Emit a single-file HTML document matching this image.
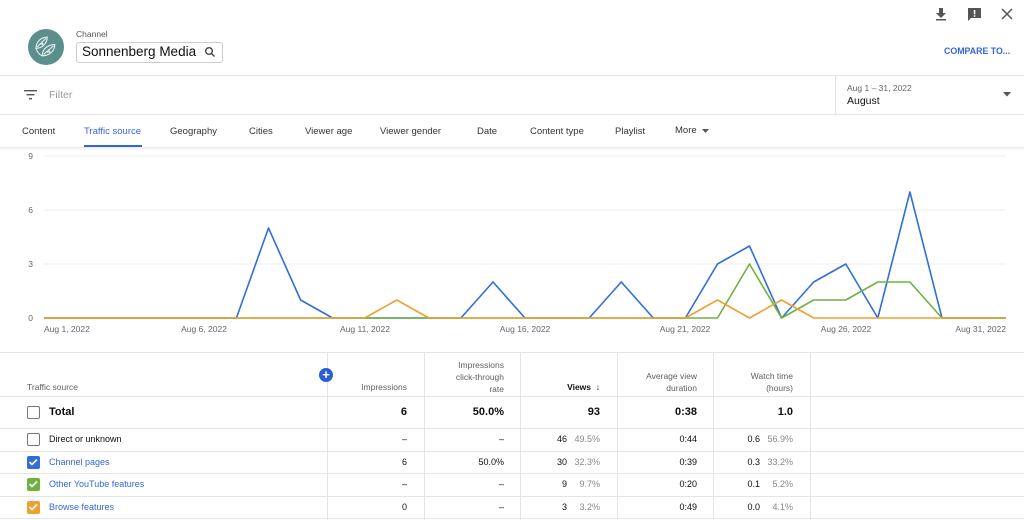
<!DOCTYPE html>
<html><head><meta charset="utf-8"><style>
*{box-sizing:border-box;margin:0;padding:0}
body{width:1024px;height:520px;overflow:hidden;background:#fff;font-family:"Liberation Sans",Arial,sans-serif;color:#0d0d0d;position:relative}
.a{position:absolute}
.t{font-size:10px;color:#333}
.hdr{font-size:8.5px;color:#606060;text-align:right;line-height:12px}
.num{font-size:9px;color:#0d0d0d;text-align:right}
.g{color:#888}
.vl{position:absolute;top:352px;height:168px;width:1px;background:#e5e5e5}
.hl{position:absolute;left:0;width:1024px;height:1px;background:#e5e5e5}
.cb{position:absolute;left:27px;width:13px;height:13px;border-radius:2px}
.lnk{color:#3467d6}
</style></head><body>
<!-- top -->
<div class="a" style="left:28px;top:29px;width:36px;height:36px;border-radius:50%;background:#5b8f8c"></div>
<svg class="a" style="left:31px;top:32px" width="30" height="30" viewBox="0 0 24 24" fill="none" stroke="#e4efee" stroke-width="0.9"><path d="M4 13c0-5 4-9 9-9 0 5-4 9-9 9z M5 12l7-7 M7 9.5h3 M9 7.5v3"/><path d="M9 19c0-5 4-9 10-9 0 5-4 9-10 9z M10 18l8-7 M12 16h3.5 M14.5 13.5v3"/><path d="M4 13c1 3 3 6 6 6"/></svg>
<div class="a" style="left:76px;top:29px;font-size:8.5px;color:#555">Channel</div>
<div class="a" style="left:76px;top:42px;width:147px;height:21px;border:1px solid #ccc;border-radius:3px"></div>
<div class="a" style="left:82px;top:44px;font-size:13.5px;color:#111">Sonnenberg Media</div>
<svg class="a" style="left:204px;top:46px" width="12" height="12" viewBox="0 0 12 12" fill="none" stroke="#444" stroke-width="1.4"><circle cx="5" cy="5" r="3.3"/><path d="M7.5 7.5l3 3"/></svg>
<svg class="a" style="left:935px;top:8px" width="12" height="13" viewBox="0 0 12 13"><path d="M4 0h4v5h3l-5 5-5-5h3z M1 11h10v1.5H1z" fill="#555"/></svg>
<svg class="a" style="left:967px;top:7px" width="15" height="15" viewBox="0 0 15 15"><path d="M1 1h13v10H4l-3 3z" fill="#555"/><rect x="6.8" y="3" width="1.5" height="4.5" fill="#fff"/><rect x="6.8" y="8.3" width="1.5" height="1.5" fill="#fff"/></svg>
<svg class="a" style="left:1001px;top:8px" width="12" height="12" viewBox="0 0 12 12" stroke="#555" stroke-width="1.5"><path d="M1 1l10 10M11 1L1 11"/></svg>
<div class="a" style="left:944px;top:46px;font-size:8.8px;color:#3467d6;font-weight:bold">COMPARE TO...</div>
<div class="hl" style="top:75px"></div>
<svg class="a" style="left:24px;top:89px" width="13" height="11" viewBox="0 0 13 11" fill="#555"><rect x="0" y="1" width="13" height="1.4"/><rect x="2.5" y="5" width="8" height="1.4"/><rect x="5" y="9" width="3" height="1.4"/></svg>
<div class="a" style="left:49px;top:89px;font-size:10.5px;color:#999">Filter</div>
<div class="a" style="left:835px;top:75px;width:1px;height:39px;background:#e5e5e5"></div>
<div class="a" style="left:847px;top:83px;font-size:8.5px;color:#666">Aug 1 – 31, 2022</div>
<div class="a" style="left:847px;top:95px;font-size:10.5px;color:#111">August</div>
<svg class="a" style="left:1003px;top:92px" width="8" height="5"><path d="M0 0h8L4 4.5z" fill="#555"/></svg>
<div class="hl" style="top:114px"></div>
<!-- tabs -->
<div class="a t" style="left:22px;top:126px;font-size:9.5px">Content</div>
<div class="a t" style="left:84px;top:126px;font-size:9.5px;color:#3467d6">Traffic source</div>
<div class="a" style="left:84px;top:145px;width:58px;height:2px;background:#3467d6"></div>
<div class="a t" style="left:170px;top:126px;font-size:9.5px">Geography</div>
<div class="a t" style="left:249px;top:126px;font-size:9.5px">Cities</div>
<div class="a t" style="left:305px;top:126px;font-size:9.5px">Viewer age</div>
<div class="a t" style="left:380px;top:126px;font-size:9.5px">Viewer gender</div>
<div class="a t" style="left:477px;top:126px;font-size:9.5px">Date</div>
<div class="a t" style="left:530px;top:126px;font-size:9.5px">Content type</div>
<div class="a t" style="left:615px;top:126px;font-size:9.5px">Playlist</div>
<div class="a t" style="left:675px;top:125px;font-size:9.5px">More</div>
<svg class="a" style="left:702px;top:129px" width="7" height="4"><path d="M0 0h7L3.5 4z" fill="#555"/></svg>
<div class="a" style="left:0;top:147px;width:1024px;height:3px;background:linear-gradient(#e8e8e8,#fff)"></div>
<!-- chart -->
<svg class="a" style="left:0;top:148px" width="1024" height="190" viewBox="0 148 1024 190" font-family="Liberation Sans,Arial,sans-serif" font-size="8.5" fill="#666">
<g stroke="#ececec" stroke-width="1"><line x1="44" x2="1006" y1="156" y2="156"/><line x1="44" x2="1006" y1="210" y2="210"/><line x1="44" x2="1006" y1="264" y2="264"/></g>
<text x="33" y="159" text-anchor="end">9</text><text x="33" y="213" text-anchor="end">6</text><text x="33" y="267" text-anchor="end">3</text><text x="33" y="321" text-anchor="end">0</text>
<g text-anchor="middle"><text x="44" y="332" text-anchor="start">Aug 1, 2022</text><text x="204" y="332">Aug 6, 2022</text><text x="365" y="332">Aug 11, 2022</text><text x="525" y="332">Aug 16, 2022</text><text x="685" y="332">Aug 21, 2022</text><text x="846" y="332">Aug 26, 2022</text><text x="1006" y="332" text-anchor="end">Aug 31, 2022</text></g>
<g fill="none" stroke-width="1.6" stroke-linejoin="round">
<polyline stroke="#2f6fd6" points="44,318 236.4,318 268.5,228 300.6,300 332.6,318 460.9,318 493,282 525,318 589.2,318 621.3,282 653.3,318 685.4,318 717.5,264 749.5,246 781.6,318 813.7,282 845.8,264 877.8,318 909.9,192 942,318 1006,318"/>
<polyline stroke="#6eb33f" points="44,318 717.5,318 749.5,264 781.6,318 813.7,300 845.8,300 877.8,282 909.9,282 942,318 1006,318"/>
<polyline stroke="#f0a030" points="44,318 364.7,318 396.8,300 428.8,318 685.4,318 717.5,300 749.5,318 781.6,300 813.7,318 1006,318"/>
</g></svg>
<!-- table -->
<div class="hl" style="top:352px"></div>
<div class="vl" style="left:327px"></div><div class="vl" style="left:424px"></div><div class="vl" style="left:520px"></div><div class="vl" style="left:617px"></div><div class="vl" style="left:713px"></div><div class="vl" style="left:810px"></div>
<div class="a hdr" style="left:27px;top:381px;text-align:left">Traffic source</div>
<div class="a" style="left:319px;top:368px;width:14px;height:14px;border-radius:50%;background:#2a5fd3;color:#fff;font-size:13px;line-height:14px;text-align:center;font-weight:bold">+</div>
<div class="a hdr" style="left:330px;top:381px;width:77px">Impressions</div>
<div class="a hdr" style="left:426px;top:359px;width:78px">Impressions<br>click-through<br>rate</div>
<div class="a hdr" style="left:522px;top:381px;width:78px;color:#111;font-weight:bold">Views &nbsp;↓</div>
<div class="a hdr" style="left:619px;top:370px;width:78px">Average view<br>duration</div>
<div class="a hdr" style="left:715px;top:370px;width:78px">Watch time<br>(hours)</div>
<div class="hl" style="top:396px"></div>
<div class="cb" style="top:406px;border:1.3px solid #777"></div>
<div class="a" style="left:49px;top:406px;font-size:11px;font-weight:bold">Total</div>
<div class="a num" style="left:330px;top:406px;width:77px;font-size:11px;font-weight:bold">6</div>
<div class="a num" style="left:426px;top:406px;width:78px;font-size:11px;font-weight:bold">50.0%</div>
<div class="a num" style="left:522px;top:406px;width:78px;font-size:11px;font-weight:bold">93</div>
<div class="a num" style="left:619px;top:406px;width:78px;font-size:11px;font-weight:bold">0:38</div>
<div class="a num" style="left:715px;top:406px;width:78px;font-size:11px;font-weight:bold">1.0</div>
<div class="hl" style="top:428px"></div>
<div class="hl" style="top:451px"></div>
<div class="hl" style="top:473px"></div>
<div class="hl" style="top:496px"></div>
<div class="hl" style="top:518px"></div>
<!-- rows -->
<div class="cb" style="top:433px;border:1.3px solid #777"></div>
<div class="a" style="left:49px;top:434px;font-size:9px">Direct or unknown</div>
<div class="a num" style="left:330px;top:434px;width:77px">–</div><div class="a num" style="left:426px;top:434px;width:78px">–</div>
<div class="a num" style="left:522px;top:434px;width:78px">46 &nbsp;&nbsp;<span class="g">49.5%</span></div>
<div class="a num" style="left:619px;top:434px;width:78px">0:44</div>
<div class="a num" style="left:715px;top:434px;width:78px">0.6 &nbsp;&nbsp;<span class="g">56.9%</span></div>

<div class="cb" style="top:456px;background:#2f6fd6"></div>
<div class="a lnk" style="left:49px;top:457px;font-size:9px">Channel pages</div>
<div class="a num" style="left:330px;top:457px;width:77px">6</div><div class="a num" style="left:426px;top:457px;width:78px">50.0%</div>
<div class="a num" style="left:522px;top:457px;width:78px">30 &nbsp;&nbsp;<span class="g">32.3%</span></div>
<div class="a num" style="left:619px;top:457px;width:78px">0:39</div>
<div class="a num" style="left:715px;top:457px;width:78px">0.3 &nbsp;&nbsp;<span class="g">33.2%</span></div>

<div class="cb" style="top:478px;background:#6eb33f"></div>
<div class="a lnk" style="left:49px;top:479px;font-size:9px">Other YouTube features</div>
<div class="a num" style="left:330px;top:479px;width:77px">–</div><div class="a num" style="left:426px;top:479px;width:78px">–</div>
<div class="a num" style="left:522px;top:479px;width:78px">9 &nbsp;&nbsp;&nbsp;&nbsp;<span class="g">9.7%</span></div>
<div class="a num" style="left:619px;top:479px;width:78px">0:20</div>
<div class="a num" style="left:715px;top:479px;width:78px">0.1 &nbsp;&nbsp;&nbsp;&nbsp;<span class="g">5.2%</span></div>

<div class="cb" style="top:501px;background:#f0a030"></div>
<div class="a lnk" style="left:49px;top:502px;font-size:9px">Browse features</div>
<div class="a num" style="left:330px;top:502px;width:77px">0</div><div class="a num" style="left:426px;top:502px;width:78px">–</div>
<div class="a num" style="left:522px;top:502px;width:78px">3 &nbsp;&nbsp;&nbsp;&nbsp;<span class="g">3.2%</span></div>
<div class="a num" style="left:619px;top:502px;width:78px">0:49</div>
<div class="a num" style="left:715px;top:502px;width:78px">0.0 &nbsp;&nbsp;&nbsp;&nbsp;<span class="g">4.1%</span></div>
<svg class="a" style="left:0;top:0" width="1024" height="520" pointer-events="none"><g fill="none" stroke="#fff" stroke-width="1.6"><path d="M29.5 462l2.5 2.5 5-5M29.5 484l2.5 2.5 5-5M29.5 507l2.5 2.5 5-5"/></g></svg>
</body></html>
